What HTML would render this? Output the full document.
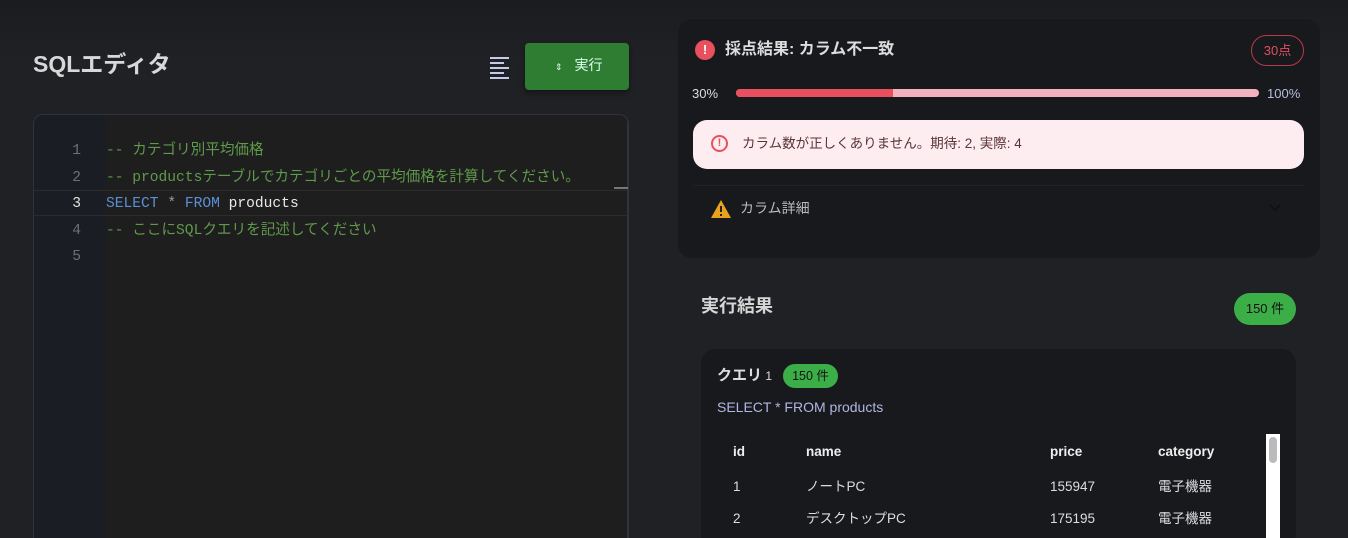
<!DOCTYPE html>
<html><head><meta charset="utf-8"><style>
*{box-sizing:border-box;margin:0;padding:0}
html,body{width:1348px;height:538px;overflow:hidden}
body{background:linear-gradient(#1b1c20,#202125 60px);font-family:"Liberation Sans","Noto Sans CJK JP",sans-serif;color:#e0e0e0;position:relative}
.abs{position:absolute;line-height:20px}
.mono{font-family:"Liberation Mono","Noto Sans CJK JP",monospace;font-size:14.6px}
.c{font-size:13.5px;color:#ddd}
</style></head><body>
<div class="abs" style="left:33px;top:50px;font-size:23px;line-height:28px;font-weight:bold;color:#d8d8d8">SQLエディタ</div>
<div class="abs" style="left:490px;top:57px;width:19px">
<div style="height:2px;background:#c5cae9;width:19px;margin-bottom:3px"></div>
<div style="height:2px;background:#c5cae9;width:14px;margin-bottom:3px"></div>
<div style="height:2px;background:#c5cae9;width:19px;margin-bottom:3px"></div>
<div style="height:2px;background:#c5cae9;width:14px;margin-bottom:3px"></div>
<div style="height:2px;background:#c5cae9;width:19px"></div>
</div>
<div class="abs" style="left:525px;top:43px;width:104px;height:47px;background:#2e7d32;border-radius:4px;box-shadow:0 3px 6px rgba(0,0,0,.4);color:#dfe;font-size:14px;line-height:45px;padding-left:30px"><span style="font-size:9px;margin-right:12px">⇕</span>実行</div>

<div class="abs" style="left:33px;top:114px;width:596px;height:440px;background:#1e1e1e;border:1px solid #2e3340;border-radius:10px;overflow:hidden">
<div class="abs" style="left:0;top:0;width:72px;height:100%;background:#1a1d24"></div>
<div class="abs" style="left:0;top:75px;width:594px;height:26px;border-top:1px solid #2c2c2c;border-bottom:1px solid #2c2c2c"></div>
<div class="abs" style="left:593px;top:0;width:1px;height:100%;background:#333"></div>
<div class="abs" style="left:580px;top:72px;width:14px;height:2px;background:#777"></div>
<div class="abs mono" style="left:0;top:23px;width:47px;text-align:right;line-height:26.5px;color:#6c7079">1<br>2<br><span style="color:#e0e0e0">3</span><br>4<br>5</div>
<div class="abs mono" style="left:72px;top:23px;line-height:26.5px;color:#5f9a4b;white-space:nowrap">-- カテゴリ別平均価格<br>-- productsテーブルでカテゴリごとの平均価格を計算してください。<br><span style="color:#5b8fd8">SELECT</span> <span style="color:#999">*</span> <span style="color:#5b8fd8">FROM</span> <span style="color:#e8e8e8">products</span><br>-- ここにSQLクエリを記述してください</div>
</div>

<div class="abs" style="left:678px;top:19px;width:642px;height:239px;background:#18191d;border-radius:14px">
<div class="abs" style="left:17px;top:21px;width:20px;height:20px;border-radius:50%;background:#e8505e;color:#fff;font-size:13px;font-weight:bold;text-align:center;line-height:20px">!</div>
<div class="abs" style="left:47px;top:20px;font-size:16px;font-weight:bold;color:#ddd;line-height:22px">採点結果: カラム不一致</div>
<div class="abs" style="left:573px;top:16px;width:53px;height:31px;border:1px solid #b83a48;border-radius:16px;color:#e0505e;font-size:13px;text-align:center;line-height:29px">30点</div>
<div class="abs" style="left:14px;top:65px;font-size:13px;color:#ddd">30%</div>
<div class="abs" style="left:58px;top:70px;width:523px;height:8px;border-radius:4px;background:#f4b2bf;overflow:hidden"><div style="width:157px;height:8px;background:#e8505f"></div></div>
<div class="abs" style="left:589px;top:65px;font-size:13px;color:#b7bde0">100%</div>
<div class="abs" style="left:15px;top:101px;width:611px;height:49px;background:#fdedf0;border-radius:14px">
<div class="abs" style="left:18px;top:15px;width:17px;height:17px;border:2px solid #e8505e;border-radius:50%;color:#e8505e;font-size:11px;font-weight:bold;text-align:center;line-height:13px">!</div>
<div class="abs" style="left:49px;top:14px;font-size:13.5px;color:#5a3438">カラム数が正しくありません。期待: 2, 実際: 4</div>
</div>
<div class="abs" style="left:15px;top:166px;width:611px;height:1px;background:#222328"></div>
<svg class="abs" style="left:32px;top:180px" width="22" height="20"><path d="M11 1L21 19H1Z" fill="#e8a21d"/><rect x="10" y="7" width="2" height="6" fill="#222"/><rect x="10" y="15" width="2" height="2" fill="#222"/></svg>
<div class="abs" style="left:62px;top:179px;font-size:14px;color:#bbb">カラム詳細</div>
<svg class="abs" style="left:590px;top:184px" width="14" height="10"><path d="M2 2L7 7L12 2" stroke="#111" stroke-width="2" fill="none"/></svg>
</div>

<div class="abs" style="left:701px;top:294px;font-size:18px;font-weight:bold;color:#d6d6d6;line-height:24px">実行結果</div>
<div class="abs" style="left:1234px;top:293px;width:62px;height:32px;border-radius:16px;background:#3cae48;color:#111;font-size:13px;text-align:center;line-height:32px">150 件</div>

<div class="abs" style="left:701px;top:349px;width:595px;height:200px;background:#18191d;border-radius:14px">
<div class="abs" style="left:16px;top:17px;font-size:15px;font-weight:bold;color:#ddd">クエリ<span style="font-size:12px;font-weight:normal"> 1</span></div>
<div class="abs" style="left:82px;top:15px;width:55px;height:24px;border-radius:12px;background:#3cae48;color:#111;font-size:12.5px;text-align:center;line-height:24px">150 件</div>
<div class="abs" style="left:16px;top:48px;font-size:14px;color:#b0b6e0">SELECT * FROM products</div>
<div class="abs" style="left:565px;top:85px;width:14px;height:120px;background:#fff"><div style="margin:3px 3px;width:8px;height:26px;border-radius:4px;background:#bbb"></div></div>
<div class="abs" style="left:32px;top:93px;font-size:13.5px;font-weight:bold;color:#eee">id</div>
<div class="abs" style="left:105px;top:93px;font-size:13.5px;font-weight:bold;color:#eee">name</div>
<div class="abs" style="left:349px;top:93px;font-size:13.5px;font-weight:bold;color:#eee">price</div>
<div class="abs" style="left:457px;top:93px;font-size:13.5px;font-weight:bold;color:#eee">category</div>
<div class="abs c" style="left:32px;top:128px">1</div>
<div class="abs c" style="left:105px;top:128px">ノートPC</div>
<div class="abs c" style="left:349px;top:128px">155947</div>
<div class="abs c" style="left:457px;top:128px">電子機器</div>
<div class="abs c" style="left:32px;top:160px">2</div>
<div class="abs c" style="left:105px;top:160px">デスクトップPC</div>
<div class="abs c" style="left:349px;top:160px">175195</div>
<div class="abs c" style="left:457px;top:160px">電子機器</div>
</div>
</body></html>
